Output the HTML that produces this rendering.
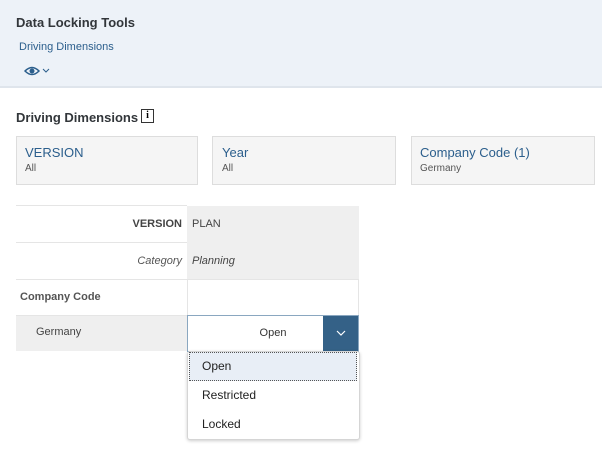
<!DOCTYPE html><html><head><style>
body{margin:0;width:602px;height:450px;background:#fff;font-family:"Liberation Sans",sans-serif;position:relative;overflow:hidden}
.a{position:absolute}
</style></head><body>
<div class="a" style="left:0;top:0;width:602px;height:86px;background:#edf2f8;border-bottom:2px solid #dfe5ec"></div>
<div class="a" style="left:16px;top:15px;font-size:13px;font-weight:bold;color:#32363a">Data Locking Tools</div>
<div class="a" style="left:19px;top:41px;font-size:11px;color:#2b5e8c">Driving Dimensions</div>
<svg class="a" style="left:24px;top:65px" width="28" height="12"><path d="M1 6 Q8 -1 15 6 Q8 13 1 6Z" fill="none" stroke="#2b5e8c" stroke-width="1.5"/><circle cx="8" cy="6" r="2.5" fill="#2b5e8c"/><path d="M19 4 L22 7 L25 4" fill="none" stroke="#2b5e8c"/></svg>
<div class="a" style="left:16px;top:110px;font-size:13px;font-weight:bold;color:#32363a">Driving Dimensions</div>
<div class="a" style="left:141px;top:109px;width:11px;height:12px;border:1px solid #333;font-size:10px;line-height:12px;text-align:center;font-weight:bold;font-family:'Liberation Serif',serif">i</div>
<div class="a" style="left:16px;top:136px;width:180px;height:47px;background:#f5f5f5;border:1px solid #ddd"></div>
<div class="a" style="left:212px;top:136px;width:182px;height:47px;background:#f5f5f5;border:1px solid #ddd"></div>
<div class="a" style="left:411px;top:136px;width:182px;height:47px;background:#f5f5f5;border:1px solid #ddd"></div>
<div class="a" style="left:25px;top:145px;font-size:13px;color:#2b5e8c">VERSION</div><div class="a" style="left:25px;top:163px;font-size:10px;color:#555">All</div>
<div class="a" style="left:222px;top:145px;font-size:13px;color:#2b5e8c">Year</div><div class="a" style="left:222px;top:163px;font-size:10px;color:#555">All</div>
<div class="a" style="left:420px;top:145px;font-size:13px;color:#2b5e8c">Company Code (1)</div><div class="a" style="left:420px;top:163px;font-size:10px;color:#555">Germany</div>
<div class="a" style="left:187px;top:206px;width:172px;height:73px;background:#efefef"></div>
<div class="a" style="left:16px;top:315px;width:171px;height:36px;background:#efefef"></div>
<div class="a" style="left:16px;top:205px;width:171px;border-top:1px solid #e5e5e5"></div>
<div class="a" style="left:16px;top:242px;width:171px;border-top:1px solid #e5e5e5"></div>
<div class="a" style="left:16px;top:279px;width:343px;border-top:1px solid #e5e5e5"></div>
<div class="a" style="left:16px;top:315px;width:171px;border-top:1px solid #e5e5e5"></div>
<div class="a" style="left:187px;top:279px;height:36px;border-left:1px solid #e5e5e5"></div>
<div class="a" style="left:358px;top:279px;height:36px;border-left:1px solid #e5e5e5"></div>
<div class="a" style="left:16px;top:218px;width:166px;text-align:right;font-size:11px;font-weight:bold;color:#444">VERSION</div>
<div class="a" style="left:192px;top:218px;font-size:11px;color:#444">PLAN</div>
<div class="a" style="left:16px;top:255px;width:166px;text-align:right;font-size:11px;font-style:italic;color:#555">Category</div>
<div class="a" style="left:192px;top:255px;font-size:11px;font-style:italic;color:#444">Planning</div>
<div class="a" style="left:20px;top:291px;font-size:11px;font-weight:bold;color:#555">Company Code</div>
<div class="a" style="left:36px;top:326px;font-size:11px;color:#444">Germany</div>
<div class="a" style="left:187px;top:315px;width:170px;height:35px;background:#fff;border:1px solid #8aa7c0"></div>
<div class="a" style="left:323px;top:316px;width:35px;height:35px;background:#346187"></div>
<svg class="a" style="left:335px;top:329px" width="12" height="8"><path d="M2 2 L6 6 L10 2" fill="none" stroke="#fff" stroke-width="1.2"/></svg>
<div class="a" style="left:187px;top:327px;width:172px;text-align:center;font-size:11px;color:#333">Open</div>
<div class="a" style="left:187px;top:351px;width:171px;height:87px;background:#fff;border:1px solid #d5d5d5;border-radius:3px;box-shadow:0 1px 3px rgba(0,0,0,.2)"></div>
<div class="a" style="left:189px;top:352px;width:166px;height:27px;background:#e8eef6;border:1px dotted #555"></div>
<div class="a" style="left:202px;top:359px;font-size:12px;color:#222">Open</div>
<div class="a" style="left:202px;top:388px;font-size:12px;color:#222">Restricted</div>
<div class="a" style="left:202px;top:417px;font-size:12px;color:#222">Locked</div>
</body></html>
